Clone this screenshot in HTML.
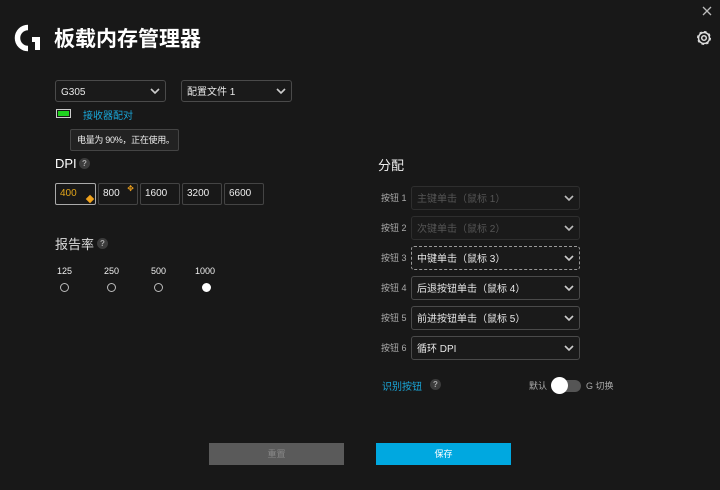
<!DOCTYPE html>
<html><head><meta charset="utf-8"><style>
*{box-sizing:border-box;margin:0;padding:0}
body{width:720px;height:490px;background:#181818;font-family:"Liberation Sans","Noto Sans CJK SC",sans-serif;color:#e8e8e8;position:relative;overflow:hidden;font-size:10px;white-space:nowrap}
.a{position:absolute}
.dd{position:absolute;border:1px solid #4a4a4a;border-radius:3px;background:#1a1a1a;font-size:10px;padding-left:5px;padding-top:3px;display:flex;align-items:center;color:#e8e8e8;line-height:1}
.dd svg{position:absolute;right:5px;top:50%;margin-top:-4px}
.q{position:absolute;width:11px;height:11px;border-radius:50%;background:#3c3c3c;color:#aaa;font-size:8px;text-align:center;line-height:11px;font-weight:bold;font-family:"Liberation Sans",sans-serif}
.dpi{position:absolute;top:183px;height:22px;border:1px solid #444;border-radius:2px;font-size:10px;padding-left:4px;line-height:20px;color:#eee}
.rl{position:absolute;font-size:9px;color:#eee}
.rd{position:absolute;top:283px;width:9px;height:9px;border:1.5px solid #bbb;border-radius:50%}
.lab{position:absolute;left:381px;font-size:9px;color:#aaa;line-height:1}
</style></head><body>
<svg class="a" style="left:13px;top:24px" width="29" height="28" viewBox="0 0 29 28"><path d="M15 3.5 A10.5 10.5 0 1 0 15 24.5" fill="none" stroke="#fff" stroke-width="5.5"/><path d="M19 13 H27 V26 H22 V18 H19 Z" fill="#fff"/></svg>
<div class="a" style="left:54px;top:23px;font-size:21px;font-weight:bold;color:#fff">板载内存管理器</div>
<svg class="a" style="left:702px;top:6px" width="10" height="10"><path d="M1 1L9 9M9 1L1 9" stroke="#bbb" stroke-width="1.3"/></svg>
<svg class="a" style="left:694px;top:28px" width="20" height="20" viewBox="0 0 20 20"><circle cx="10" cy="10" r="6" fill="none" stroke="#ddd" stroke-width="2" stroke-dasharray="2.4 2.3"/><circle cx="10" cy="10" r="5.5" fill="none" stroke="#ddd" stroke-width="1.5"/><circle cx="10" cy="10" r="2.3" fill="none" stroke="#ddd" stroke-width="1.5"/></svg>

<div class="dd" style="left:55px;top:80px;width:111px;height:22px">G305<svg width="10" height="8"><path d="M1 2L5 6L9 2" fill="none" stroke="#ccc" stroke-width="1.6"/></svg></div>
<div class="dd" style="left:181px;top:80px;width:111px;height:22px">配置文件 1<svg width="10" height="8"><path d="M1 2L5 6L9 2" fill="none" stroke="#ccc" stroke-width="1.6"/></svg></div>
<div class="a" style="left:56px;top:109px;width:15px;height:9px;border:1px solid #ccc;padding:1px"><div style="background:#1fd31f;width:100%;height:100%"></div></div>
<div class="a" style="left:83px;top:107px;font-size:10px;color:#1aa6d8">接收器配对</div>
<div class="a" style="left:70px;top:129px;width:109px;height:22px;background:#222;border:1px solid #444;border-radius:2px;font-size:9px;line-height:20px;padding-left:6px;color:#eee;letter-spacing:-0.3px">电量为 90%，正在使用。</div>

<div class="a" style="left:55px;top:156px;font-size:13px;color:#fff">DPI</div>
<span class="q" style="left:79px;top:158px">?</span>
<div class="dpi" style="left:55px;width:41px;border-color:#aaa;color:#e1a41a">400<div class="a" style="right:2px;bottom:2px;width:6px;height:6px;background:#f0a21c;transform:rotate(45deg)"></div></div>
<div class="dpi" style="left:98px;width:40px">800<div class="a" style="right:3px;top:1px;color:#f0a21c;font-size:8px;line-height:8px">✥</div></div>
<div class="dpi" style="left:140px;width:40px">1600</div>
<div class="dpi" style="left:182px;width:40px">3200</div>
<div class="dpi" style="left:224px;width:40px">6600</div>

<div class="a" style="left:55px;top:234px;font-size:13px;color:#ddd">报告率</div>
<span class="q" style="left:97px;top:238px">?</span>
<div class="rl" style="left:57px;top:266px">125</div>
<div class="rl" style="left:104px;top:266px">250</div>
<div class="rl" style="left:151px;top:266px">500</div>
<div class="rl" style="left:195px;top:266px">1000</div>
<div class="rd" style="left:60px"></div>
<div class="rd" style="left:107px"></div>
<div class="rd" style="left:154px"></div>
<div class="rd" style="left:202px;background:#fff;border-color:#fff"></div>

<div class="a" style="left:378px;top:155px;font-size:13px;color:#eee">分配</div>
<div class="lab" style="top:194px">按钮 1</div>
<div class="dd" style="left:411px;top:186px;width:169px;height:24px;border-color:#2e2e2e;color:#555">主键单击（鼠标 1）<svg width="10" height="8"><path d="M1 2L5 6L9 2" fill="none" stroke="#bbb" stroke-width="1.6"/></svg></div>
<div class="lab" style="top:224px">按钮 2</div>
<div class="dd" style="left:411px;top:216px;width:169px;height:24px;border-color:#2e2e2e;color:#555">次键单击（鼠标 2）<svg width="10" height="8"><path d="M1 2L5 6L9 2" fill="none" stroke="#bbb" stroke-width="1.6"/></svg></div>
<div class="lab" style="top:254px">按钮 3</div>
<div class="dd" style="left:411px;top:246px;width:169px;height:24px;border:1px dashed #999">中键单击（鼠标 3）<svg width="10" height="8"><path d="M1 2L5 6L9 2" fill="none" stroke="#ccc" stroke-width="1.6"/></svg></div>
<div class="lab" style="top:284px">按钮 4</div>
<div class="dd" style="left:411px;top:276px;width:169px;height:24px">后退按钮单击（鼠标 4）<svg width="10" height="8"><path d="M1 2L5 6L9 2" fill="none" stroke="#ccc" stroke-width="1.6"/></svg></div>
<div class="lab" style="top:314px">按钮 5</div>
<div class="dd" style="left:411px;top:306px;width:169px;height:24px">前进按钮单击（鼠标 5）<svg width="10" height="8"><path d="M1 2L5 6L9 2" fill="none" stroke="#ccc" stroke-width="1.6"/></svg></div>
<div class="lab" style="top:344px">按钮 6</div>
<div class="dd" style="left:411px;top:336px;width:169px;height:24px">循环 DPI<svg width="10" height="8"><path d="M1 2L5 6L9 2" fill="none" stroke="#ccc" stroke-width="1.6"/></svg></div>

<div class="a" style="left:382px;top:378px;font-size:10px;color:#1aa6d8">识别按钮</div>
<span class="q" style="left:430px;top:379px">?</span>
<div class="a" style="left:529px;top:379px;font-size:9px;color:#aaa">默认</div>
<div class="a" style="left:553px;top:380px;width:28px;height:12px;border-radius:6px;background:#555"></div>
<div class="a" style="left:551px;top:377px;width:17px;height:17px;border-radius:50%;background:#fff"></div>
<div class="a" style="left:586px;top:379px;font-size:9px;color:#aaa">G 切换</div>

<div class="a" style="left:209px;top:443px;width:135px;height:22px;background:#5a5a5a;color:#888;font-size:9px;text-align:center;line-height:22px">重置</div>
<div class="a" style="left:376px;top:443px;width:135px;height:22px;background:#00a8e0;color:#fff;font-size:9px;text-align:center;line-height:22px">保存</div>
</body></html>
